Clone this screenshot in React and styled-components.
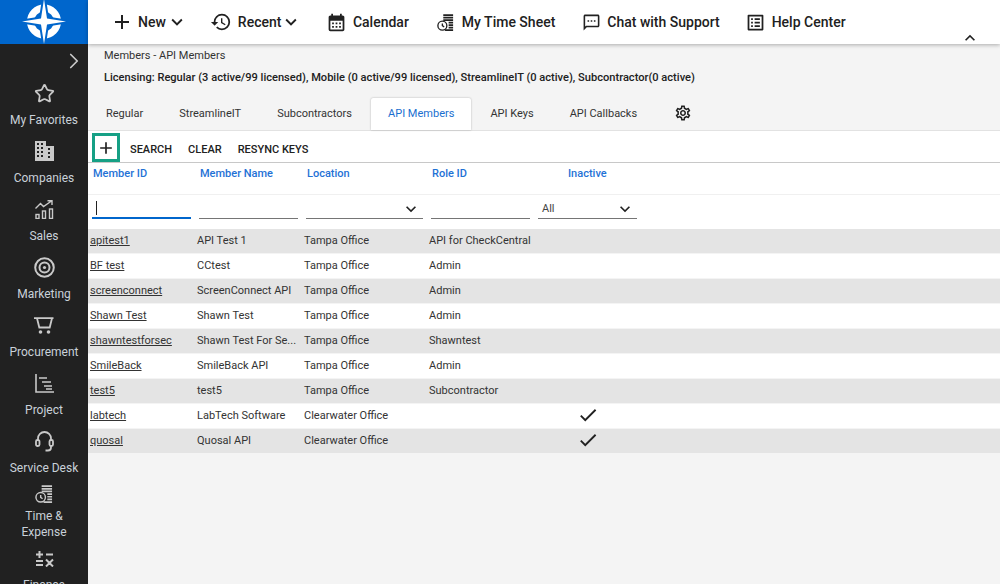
import React from "react";
import styled, { createGlobalStyle } from "styled-components";
import { MdAdd, MdHistory, MdKeyboardArrowDown, MdKeyboardArrowUp, MdCheck, MdOutlineSettings, MdOutlineListAlt, MdOutlineSms, MdCalendarMonth } from "react-icons/md";
import { Star, ChevronRight } from "lucide-react";

const GlobalStyle = createGlobalStyle`
  html, body { margin: 0; padding: 0; height: 100%; overflow: hidden; }
  body { font-family: Roboto, "Liberation Sans", sans-serif; background: #f4f4f4; }
  #root { height: 100%; }
`;

const Logo = () => (
  <svg width="48" height="44" viewBox="0 0 48 44">
    <circle cx="24" cy="21.500" r="13.500" fill="none" stroke="#fff" strokeWidth="7" />
    <path d="M24 -1 L27 18.500 L46 21.500 L27 24.500 L24 44 L21 24.500 L2 21.500 L21 18.500 Z" fill="#fff" stroke="#0066cc" strokeWidth="4" paintOrder="stroke" />
  </svg>
);

const CompaniesIcon = () => (
  <svg width="19" height="20" viewBox="0 0 19 20" fill="#c9c9c9">
    <path fillRule="evenodd" d="M0 0h11v5h8v15H0zM2 2v2h2V2zm4 0v2h2V2zM2 6v2h2V6zm4 0v2h2V6zm-4 4v2h2v-2zm4 0v2h2v-2zm-4 4v2h2v-2zm4 0v2h2v-2zm7-7v2h2V7zm0 4v2h2v-2zm0 4v2h2v-2z" />
  </svg>
);

const SalesIcon = () => (
  <svg width="19" height="19" viewBox="0 0 19 19" fill="none" stroke="#c9c9c9" strokeWidth="1.400">
    <path d="M0.500 8.500l5-5 3 3 8-5.500M12.500 0.700H17v4.300" />
    <rect x="1" y="14.500" width="3" height="4" />
    <rect x="7.500" y="11" width="3" height="7.500" />
    <rect x="14.500" y="9" width="3" height="9.500" />
  </svg>
);

const TargetIcon = () => (
  <svg width="21" height="21" viewBox="0 0 21 21" fill="none" stroke="#c9c9c9" strokeWidth="2">
    <circle cx="10.500" cy="10.500" r="9.300" />
    <circle cx="10.500" cy="10.500" r="5" />
    <circle cx="10.500" cy="10.500" r="1.600" fill="#c9c9c9" stroke="none" />
  </svg>
);

const CartIcon = () => (
  <svg width="20" height="17" viewBox="0 0 20 17" fill="none" stroke="#c9c9c9" strokeWidth="1.800">
    <path d="M0 1.200h19.500M3 1.200l2.300 9.300h10.400l2.300-9.300" />
    <circle cx="6.500" cy="15" r="1.800" fill="#c9c9c9" stroke="none" />
    <circle cx="14.500" cy="15" r="1.800" fill="#c9c9c9" stroke="none" />
  </svg>
);

const ProjectIcon = () => (
  <svg width="19" height="19" viewBox="0 0 19 19" fill="none" stroke="#c9c9c9" strokeWidth="1.600">
    <path d="M1 0v18h18M4 4h8M7 8h9M9 12h8M11 15h6" />
  </svg>
);

const HeadsetIcon = () => (
  <svg width="19" height="21" viewBox="0 0 19 21" fill="none" stroke="#c9c9c9" strokeWidth="1.800">
    <path d="M3 9V7.500a6.500 6.500 0 0 1 13 0V9" />
    <rect x="1" y="9" width="3.500" height="6" rx="1.500" />
    <rect x="14.500" y="9" width="3.500" height="6" rx="1.500" />
    <path d="M16 15v1.500a3 3 0 0 1-3 3h-2.500" />
  </svg>
);

const TimeIcon = ({ size = 18, color = "#c9c9c9" }) => (
  <svg width={size} height={size} viewBox="0 0 19 19" fill="none" stroke={color} strokeWidth="1.500">
    <circle cx="6" cy="13" r="5" />
    <path d="M6 10.500V13l2 1.500" />
    <path d="M7 1.200h11M7 4h11M7 6.800h11M13 9.600h5M13 12.400h5M13 15.200h5M9 18h9" strokeWidth="1.800" />
  </svg>
);

const FinanceIcon = () => (
  <svg width="19" height="17" viewBox="0 0 19 17" fill="none" stroke="#c9c9c9" strokeWidth="2">
    <path d="M1 4.500h7M4.500 1v7M11 4.500h7M1 11h7M1 15h7M11 9.500l7 7M18 9.500l-7 7" />
  </svg>
);

const navItems = [
  { label: "My Favorites", icon: <Star size={21} strokeWidth={2} /> },
  { label: "Companies", icon: <CompaniesIcon /> },
  { label: "Sales", icon: <SalesIcon /> },
  { label: "Marketing", icon: <TargetIcon /> },
  { label: "Procurement", icon: <CartIcon /> },
  { label: "Project", icon: <ProjectIcon /> },
  { label: "Service Desk", icon: <HeadsetIcon /> },
  { label: "Time & Expense", icon: <TimeIcon />, compact: true },
  { label: "Finance", icon: <FinanceIcon /> },
];

const tabs = ["Regular", "StreamlineIT", "Subcontractors", "API Members", "API Keys", "API Callbacks"];

const members = [
  ["apitest1", "API Test 1", "Tampa Office", "API for CheckCentral", false],
  ["BF test", "CCtest", "Tampa Office", "Admin", false],
  ["screenconnect", "ScreenConnect API", "Tampa Office", "Admin", false],
  ["Shawn Test", "Shawn Test", "Tampa Office", "Admin", false],
  ["shawntestforsec", "Shawn Test For Se...", "Tampa Office", "Shawntest", false],
  ["SmileBack", "SmileBack API", "Tampa Office", "Admin", false],
  ["test5", "test5", "Tampa Office", "Subcontractor", false],
  ["labtech", "LabTech Software", "Clearwater Office", "", true],
  ["quosal", "Quosal API", "Clearwater Office", "", true],
];

function App() {
  return (
    <Page>
      <GlobalStyle />
      <Sidebar>
        <LogoBox><Logo /></LogoBox>
        <Expand><ChevronRight size={26} strokeWidth={1.6} /></Expand>
        {navItems.map((item) => (
          <NavItem key={item.label} $compact={item.compact}>
            <NavIcon>{item.icon}</NavIcon>
            <NavLabel $compact={item.compact}>{item.label}</NavLabel>
          </NavItem>
        ))}
      </Sidebar>
      <Main>
        <TopBar>
          <TopItem $gap={4} $trim={3}><MdAdd size={24} />New<Chevron size={22} $shift={-4} /></TopItem>
          <TopItem $gap={4} $trim={1.500}><HistoryIcon size={22} />Recent<Chevron size={22} $shift={-5} /></TopItem>
          <TopItem $gap={6}><MdCalendarMonth size={21} />Calendar</TopItem>
          <TopItem $gap={8} $pad={3}><TimeIcon size={17} color="#212121" />My Time Sheet</TopItem>
          <TopItem $gap={6} $pad={2}><MdOutlineSms size={19} />Chat with Support</TopItem>
          <TopItem $gap={6}><MdOutlineListAlt size={21} />Help Center</TopItem>
          <Collapse><MdKeyboardArrowUp size={20} /></Collapse>
        </TopBar>
        <Crumb>Members - API Members</Crumb>
        <Licensing>Licensing: Regular (3 active/99 licensed), Mobile (0 active/99 licensed), StreamlineIT (0 active), Subcontractor(0 active)</Licensing>
        <TabRow>
          {tabs.map((tab) => (
            <Tab key={tab} $active={tab === "API Members"}>{tab}</Tab>
          ))}
          <GearTab><MdOutlineSettings size={18} /></GearTab>
        </TabRow>
        <Panel>
          <Toolbar>
            <AddButton><MdAdd size={20} /></AddButton>
            <ToolButton>SEARCH</ToolButton>
            <ToolButton>CLEAR</ToolButton>
            <ToolButton>RESYNC KEYS</ToolButton>
          </Toolbar>
          <HeaderRow>
            <HeaderCell>Member ID</HeaderCell>
            <HeaderCell>Member Name</HeaderCell>
            <HeaderCell>Location</HeaderCell>
            <HeaderCell>Role ID</HeaderCell>
            <HeaderCell>Inactive</HeaderCell>
          </HeaderRow>
          <FilterRow>
            <FilterField $focused><Caret /></FilterField>
            <FilterField />
            <FilterField $wide><MdKeyboardArrowDown size={20} /></FilterField>
            <FilterField />
            <FilterField>All<MdKeyboardArrowDown size={20} /></FilterField>
          </FilterRow>
        </Panel>
        <Rows>
          {members.map((m, i) => (
            <Row key={m[0]} $odd={i % 2 === 0}>
              <MemberLink>{m[0]}</MemberLink>
              <Cell>{m[1]}</Cell>
              <Cell>{m[2]}</Cell>
              <Cell>{m[3]}</Cell>
              <CheckCell>{m[4] && <MdCheck size={22} />}</CheckCell>
            </Row>
          ))}
        </Rows>
      </Main>
    </Page>
  );
}

export default App;

const Page = styled.div`
  display: flex;
  width: 1000px;
  height: 584px;
  overflow: hidden;
`;

const Sidebar = styled.nav`
  width: 88px;
  flex: none;
  background: #212121;
  overflow: hidden;
`;

const LogoBox = styled.div`
  height: 44px;
  background: #0066cc;
  display: flex;
  justify-content: center;
  overflow: hidden;
`;

const Expand = styled.div`
  height: 34px;
  padding: 0 0 3px 61px;
  display: flex;
  align-items: center;
  color: #c9c9c9;
`;

const NavItem = styled.div`
  display: flex;
  flex-direction: column;
  align-items: center;
  height: ${(p) => (p.$compact ? "64px" : "58px")};
  margin-top: ${(p) => (p.$compact ? "-5px" : "0")};
`;

const NavIcon = styled.div`
  height: 24px;
  flex: none;
  display: flex;
  align-items: center;
  justify-content: center;
  color: #c9c9c9;
`;

const NavLabel = styled.div`
  margin-top: ${(p) => (p.$compact ? "2px" : "7px")};
  color: #c9d1d9;
  font-size: 12px;
  line-height: 16px;
  text-align: center;
  width: 72px;
`;

const Main = styled.main`
  flex: 1;
  min-width: 0;
  background: #f4f4f4;
`;

const TopBar = styled.header`
  position: relative;
  height: 44px;
  background: #fff;
  box-shadow: 0 1px 4px rgba(0, 0, 0, 0.3);
  display: flex;
  align-items: center;
  gap: 25px;
  padding-left: 22px;
`;

const TopItem = styled.div`
  display: flex;
  align-items: center;
  gap: ${(p) => p.$gap}px;
  padding-left: ${(p) => p.$pad || 0}px;
  margin-right: ${(p) => -(p.$trim || 0)}px;
  font-size: 14px;
  font-weight: 500;
  color: #212121;
  white-space: nowrap;
`;

const HistoryIcon = styled(MdHistory)`
  margin-right: 2px;
`;

const Chevron = styled(MdKeyboardArrowDown)`
  margin-left: ${(p) => p.$shift}px;
`;

const Collapse = styled.div`
  position: absolute;
  right: 20px;
  bottom: -4px;
  display: flex;
  color: #212121;
`;

const Crumb = styled.div`
  padding: 5px 0 0 16px;
  font-size: 11px;
  line-height: 14px;
  color: #333;
`;

const Licensing = styled.div`
  padding: 8px 0 0 16px;
  font-size: 11.100px;
  line-height: 14px;
  font-weight: 500;
  color: #212121;
`;

const TabRow = styled.div`
  display: flex;
  height: 32px;
  margin-top: 13px;
  align-items: stretch;
`;

const Tab = styled.div`
  padding: 0 ${(p) => (p.$active ? "17px" : "18px")} 2px;
  margin: ${(p) => (p.$active ? "0 1px" : "0")};
  display: flex;
  align-items: center;
  font-size: 11px;
  color: ${(p) => (p.$active ? "#1a6fd0" : "#333")};
  background: ${(p) => (p.$active ? "#fff" : "transparent")};
  box-shadow: ${(p) => (p.$active ? "0 0 2px rgba(0,0,0,.3)" : "none")};
  border-radius: 2px 2px 0 0;
`;

const GearTab = styled.div`
  padding: 0 0 2px 19px;
  display: flex;
  align-items: center;
  color: #212121;
`;

const Panel = styled.section`
  background: #fff;
  border-top: 1px solid #e2e2e2;
`;

const Toolbar = styled.div`
  height: 29px;
  display: flex;
  align-items: flex-start;
  padding: 2px 0 0 4px;
  border-bottom: 1px solid #c8c8c8;
`;

const AddButton = styled.div`
  width: 28px;
  height: 29px;
  box-sizing: border-box;
  border: 3px solid #16a085;
  display: flex;
  align-items: center;
  justify-content: center;
  color: #212121;
  margin-right: 10px;
`;

const ToolButton = styled.div`
  font-size: 11px;
  line-height: 14px;
  font-weight: 500;
  color: #212121;
  margin: 10px 16px 0 0;
`;

const HeaderRow = styled.div`
  height: 32px;
  display: grid;
  grid-template-columns: 107px 107px 125px 136px 100px;
  padding: 4px 0 0 5px;
  box-sizing: border-box;
  border-bottom: 1px solid #f0f0f0;
`;

const HeaderCell = styled.div`
  font-size: 11px;
  line-height: 14px;
  color: #1f72d6;
  font-weight: 500;
`;

const FilterRow = styled.div`
  height: 34px;
  display: flex;
  gap: 8px;
  padding-left: 4px;
  box-sizing: border-box;
`;

const FilterField = styled.div`
  width: ${(p) => (p.$wide ? "117px" : "99px")};
  height: 24px;
  box-sizing: border-box;
  display: flex;
  align-items: center;
  padding: 4px 2px 0 4px;
  font-size: 11px;
  color: #444;
  border-bottom: ${(p) => (p.$focused ? "2px solid #0066cc" : "1px solid #757575")};
  & > svg { margin-left: auto; color: #212121; }
`;

const Caret = styled.span`
  width: 1px;
  height: 14px;
  background: #212121;
`;

const Rows = styled.div`
  display: flex;
  flex-direction: column;
  gap: 1px;
`;

const Row = styled.div`
  height: 24px;
  box-sizing: border-box;
  padding: 0 0 2px 2px;
  display: grid;
  grid-template-columns: 107px 107px 125px 136px 46px;
  align-items: center;
  background: ${(p) => (p.$odd ? "#e4e4e4" : "#fff")};
`;

const Cell = styled.div`
  font-size: 11px;
  color: #333;
  white-space: nowrap;
`;

const MemberLink = styled(Cell)`
  text-decoration: underline;
`;

const CheckCell = styled.div`
  display: flex;
  justify-content: center;
  color: #212121;
`;
